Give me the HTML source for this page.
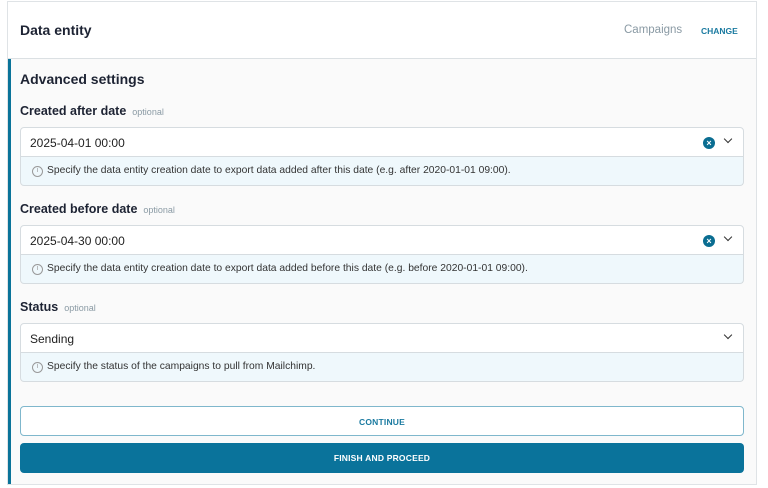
<!DOCTYPE html>
<html><head><style>
*{box-sizing:border-box;margin:0;padding:0}
body{width:768px;height:488px;background:#fff;font-family:"Liberation Sans",sans-serif;position:relative;overflow:hidden;color:#1d2333}
.card{position:absolute;left:7px;top:1px;width:750px;height:484px;border:1px solid #dfe3e6;background:#fafafa}
.hdr{position:absolute;left:0;top:0;right:0;height:57px;background:#fff;border-bottom:1px solid #dbe0e3}
.bar{position:absolute;left:0;top:57px;width:3px;bottom:0;background:#0a7399}
.abs{position:absolute}
.lbl{position:absolute;left:12px;font-size:12.5px;font-weight:bold;color:#1d2333}
.lbl span{font-weight:normal;font-size:9px;color:#8a9aa4;margin-left:6px}
.inp{position:absolute;left:12px;width:724px;height:30px;background:#fff;border:1px solid #d6dce0;border-radius:4px 4px 0 0;font-size:12px;padding:8px 9px;color:#222}
.info{position:absolute;left:12px;width:724px;height:29px;background:#eff8fc;border:1px solid #d6dce0;border-top:none;border-radius:0 0 4px 4px;font-size:10.3px;padding:8px 0 0 26px;color:#333}
.info:before{content:"i";position:absolute;left:11px;top:9px;width:9px;height:9px;border:1px solid #999;border-radius:50%;font-size:7px;line-height:8px;text-align:center;color:#999}
.x{position:absolute;right:28px;top:9px;width:12px;height:12px;border-radius:50%;background:#0a6d91;color:#fff;font-size:9px;line-height:12px;text-align:center;font-weight:bold}
.chev{position:absolute;right:12px;top:8px;width:6px;height:6px;border-right:1.5px solid #333;border-bottom:1.5px solid #333;transform:rotate(45deg)}
.btn{position:absolute;left:12px;width:724px;height:30px;border-radius:4px;font-size:8.5px;font-weight:bold;text-align:center;line-height:30px;letter-spacing:.2px}
</style></head><body>
<div class="card">
<div class="hdr">
<div class="abs" style="left:12px;top:20px;font-size:14px;font-weight:bold">Data entity</div>
<div class="abs" style="left:616px;top:22px;font-size:11.5px;color:#8a9aa4">Campaigns</div>
<div class="abs" style="left:693px;top:24px;font-size:8.5px;font-weight:bold;color:#1a7aa0">CHANGE</div>
</div>
<div class="bar"></div>
<div class="abs" style="left:12px;top:69px;font-size:14px;font-weight:bold">Advanced settings</div>
<div class="lbl" style="top:102px">Created after date<span>optional</span></div>
<div class="inp" style="top:125px">2025-04-01 00:00<div class="x">×</div><div class="chev"></div></div>
<div class="info" style="top:155px">Specify the data entity creation date to export data added after this date (e.g. after 2020-01-01 09:00).</div>
<div class="lbl" style="top:200px">Created before date<span>optional</span></div>
<div class="inp" style="top:223px">2025-04-30 00:00<div class="x">×</div><div class="chev"></div></div>
<div class="info" style="top:253px">Specify the data entity creation date to export data added before this date (e.g. before 2020-01-01 09:00).</div>
<div class="lbl" style="top:298px">Status<span>optional</span></div>
<div class="inp" style="top:321px">Sending<div class="chev"></div></div>
<div class="info" style="top:351px">Specify the status of the campaigns to pull from Mailchimp.</div>
<div class="btn" style="top:404px;background:#fff;border:1px solid #7fb7cc;color:#1a7aa0">CONTINUE</div>
<div class="btn" style="top:441px;background:#0a739b;color:#fff">FINISH AND PROCEED</div>
</div>
</body></html>
